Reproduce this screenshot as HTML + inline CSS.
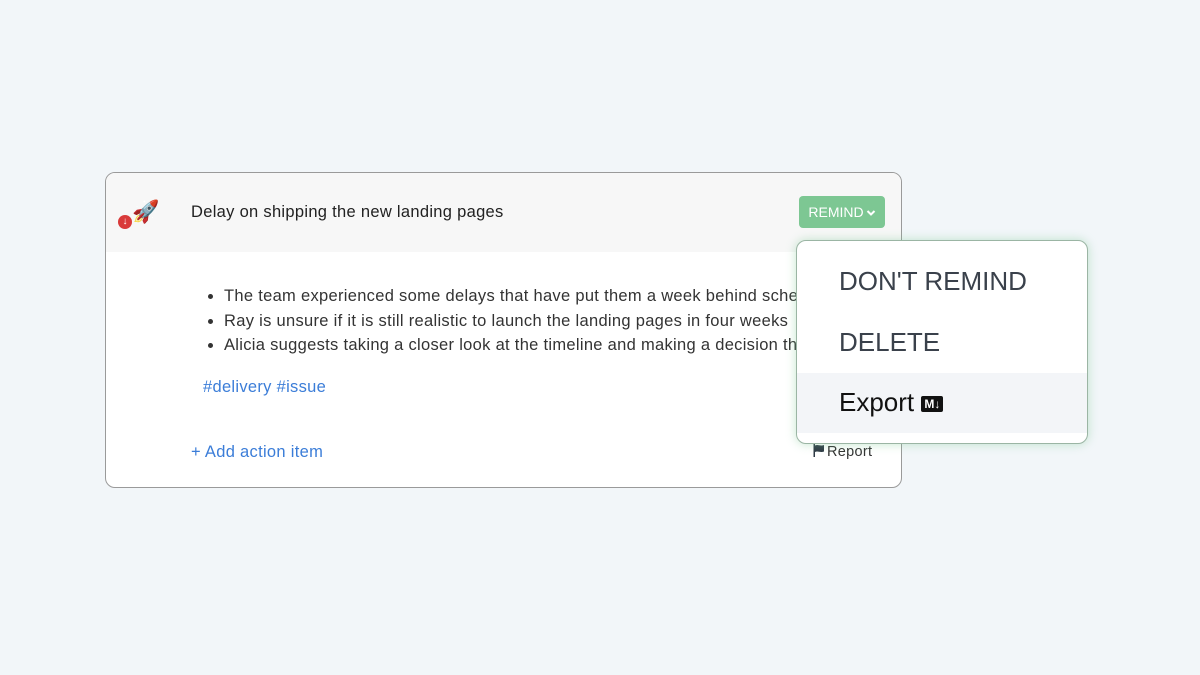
<!DOCTYPE html>
<html><head><style>
body{margin:0;width:1200px;height:675px;background:#f2f6f9;font-family:"Liberation Sans",sans-serif;position:relative;overflow:hidden}
.card{position:absolute;left:105px;top:172px;width:795px;height:314px;border:1px solid #9a9a9a;border-radius:10px;background:#fff;overflow:hidden}
.hdr{position:absolute;left:0;top:0;right:0;height:79px;background:#f7f7f7}
.t{position:absolute;white-space:nowrap;letter-spacing:0.3px}
.btn{position:absolute;left:693px;top:23px;width:86px;height:32px;background:#7dc793;border-radius:4px;color:#fff;font-size:14px;line-height:32px;text-align:center}
ul{position:absolute;left:100px;top:111px;margin:0;padding:0 0 0 18px;font-size:16.5px;color:#333;line-height:24.5px;white-space:nowrap;letter-spacing:0.3px}
.dd{position:absolute;left:796px;top:240px;width:290px;height:202px;background:#fff;border:1px solid #9bb5a4;border-radius:10px;box-shadow:0 0 10px rgba(125,199,147,.45);overflow:hidden}
.it{position:absolute;left:42px;font-size:26px;color:#3a414b;white-space:nowrap}
</style></head><body>
<div class="card">
 <div class="hdr"></div>
 <div class="t" style="left:12px;top:42px;width:14px;height:14px;border-radius:50%;background:#d93a3a;color:#fff;font-size:10px;line-height:14px;text-align:center;letter-spacing:0">↓</div>
 <div class="t" style="left:26px;top:26px;font-size:22px">🚀</div>
 <div class="t" style="left:85px;top:30px;font-size:16.5px;color:#222">Delay on shipping the new landing pages</div>
 <div class="btn">REMIND<svg width="10" height="8" viewBox="0 0 10 8" style="margin-left:2px;vertical-align:0"><path d="M1.5 2l3.5 3.5L8.5 2" stroke="#fff" stroke-width="2" fill="none"/></svg></div>
 <ul><li>The team experienced some delays that have put them a week behind schedule</li><li>Ray is unsure if it is still realistic to launch the landing pages in four weeks</li><li>Alicia suggests taking a closer look at the timeline and making a decision this week</li></ul>
 <div class="t" style="left:97px;top:205px;font-size:16.5px;color:#3b7dd8">#delivery #issue</div>
 <div class="t" style="left:85px;top:270px;font-size:16.5px;color:#3b7dd8">+ Add action item</div>
 <div class="t" style="left:706px;top:271px;font-size:14.5px;color:#333"><svg width="15" height="13" viewBox="0 0 14 13" style="vertical-align:-1px"><path d="M1 0v13h1.5V8c3-1.5 5 1 9-0.5V1C7.5 2.5 5.5 0 2.5 1.5V0z" fill="#2f3a45"/></svg>Report</div>
</div>
<div class="dd">
 <div class="it" style="top:25px">DON'T REMIND</div>
 <div class="it" style="top:86px">DELETE</div>
 <div style="position:absolute;left:0;right:0;top:132px;height:60px;background:#f3f5f8"></div>
 <div class="it" style="top:146px;color:#111">Export <span style="display:inline-block;background:#111;color:#fff;font-size:12px;font-weight:bold;padding:0 3px;border-radius:2px;line-height:16px;vertical-align:3px">M↓</span></div>
</div>
</body></html>
